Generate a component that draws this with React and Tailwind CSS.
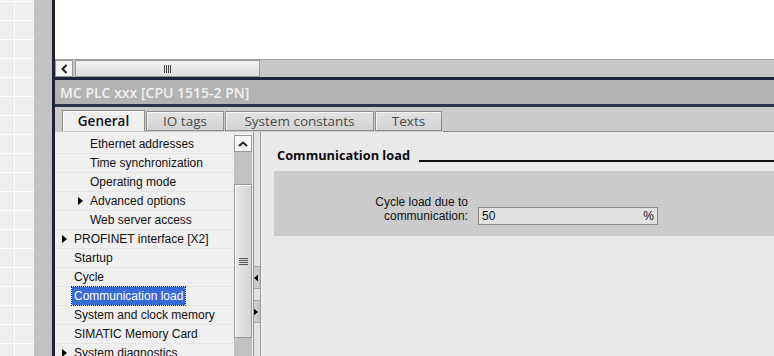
import React from "react";

const font = { fontFamily: '"Liberation Sans", Arial, sans-serif' };
const open = { fontFamily: '"Open Sans", sans-serif' };

function Tri({ dir = "right", className = "" }) {
  if (dir === "right")
    return (
      <svg width="5" height="8" viewBox="0 0 5 8" className={className}>
        <path d="M0 0 L5 4 L0 8 Z" fill="#000" />
      </svg>
    );
  return (
    <svg width="5" height="8" viewBox="0 0 5 8" className={className}>
      <path d="M5 0 L0 4 L5 8 Z" fill="#000" />
    </svg>
  );
}

const treeItems = [
  { t: "Ethernet addresses", indent: 35 },
  { t: "Time synchronization", indent: 35 },
  { t: "Operating mode", indent: 35 },
  { t: "Advanced options", indent: 35, arrow: true },
  { t: "Web server access", indent: 35 },
  { t: "PROFINET interface [X2]", indent: 19, arrow: true },
  { t: "Startup", indent: 19 },
  { t: "Cycle", indent: 19 },
  { t: "Communication load", indent: 19, sel: true },
  { t: "System and clock memory", indent: 19 },
  { t: "SIMATIC Memory Card", indent: 19 },
  { t: "System diagnostics", indent: 19, arrow: true },
];

function Tab({ label, active, w }) {
  if (active)
    return (
      <div
        className="h-[21px] mt-[3px] flex items-center justify-center border border-b-0 border-[#8e8e8e] bg-[#efefef] text-[13.5px] text-[#111] shadow-[inset_1px_1px_0_#fff]"
        style={{ width: w, ...open, fontWeight: 600 }}
      >
        {label}
      </div>
    );
  return (
    <div
      className="h-[20px] mt-[4px] flex items-center justify-center border border-[#8e8e8e] bg-gradient-to-b from-[#e2e2e2] to-[#d2d2d2] text-[13.5px] text-[#4a4a4a] shadow-[inset_1px_1px_0_#f4f4f4]"
      style={{ width: w, ...open }}
    >
      {label}
    </div>
  );
}

export default function App() {
  return (
    <div className="w-[774px] h-[356px] overflow-hidden flex bg-white" style={font}>
      {/* left grid strip */}
      <div className="w-[34px] h-full bg-[#efefef] flex flex-col shrink-0">
        <div className="h-[2px] border-b border-white shrink-0" />
        {Array.from({ length: 19 }).map((_, i) => (
          <div key={i} className="h-[19px] shrink-0 flex border-b border-white">
            <div className="w-[15px] border-r border-white" />
            <div className="flex-1" />
          </div>
        ))}
      </div>
      <div className="w-[18px] h-full bg-[#c2c2c2] shrink-0" />
      <div className="w-[3px] h-full bg-[#1d2335] shrink-0" />

      {/* main */}
      <div className="flex-1 flex flex-col min-w-0">
        <div className="h-[59px] bg-white shrink-0" />
        {/* horizontal scrollbar */}
        <div className="h-[18px] shrink-0 flex bg-[#c8c8c8] border-t border-[#a0a0a0]">
          <div className="w-[18px] h-full flex items-center justify-center bg-[#f4f4f4] border border-[#9a9a9a]">
            <svg width="7" height="10" viewBox="0 0 7 10">
              <path d="M5.5 1 L1.5 5 L5.5 9" stroke="#222" strokeWidth="2" fill="none" />
            </svg>
          </div>
          <div className="w-[2px]" />
          <div className="w-[185px] h-full flex items-center justify-center bg-gradient-to-b from-[#f2f2f2] to-[#dedede] border border-[#9a9a9a]">
            <div className="flex gap-[1px]">
              <div className="w-[1px] h-[8px] bg-[#444]" />
              <div className="w-[1px] h-[8px] bg-[#444]" />
              <div className="w-[1px] h-[8px] bg-[#444]" />
              <div className="w-[1px] h-[8px] bg-[#444]" />
            </div>
          </div>
        </div>
        <div className="h-[3px] bg-[#1f2638] shrink-0" />
        {/* title bar */}
        <div className="h-[24px] shrink-0 bg-[#b3b3b3] flex items-center pl-[5px]">
          <span className="text-[14px] text-[#f0f0f0]" style={{ ...open, fontWeight: 600 }}>
            MC PLC xxx [CPU 1515-2 PN]
          </span>
        </div>
        <div className="h-[3px] bg-[#2c3548] shrink-0" />
        {/* tab bar */}
        <div className="h-[25px] shrink-0 bg-[#cbcbcb] flex items-start pl-[7px]">
          <Tab label="General" active w={83} />
          <div className="w-[1px] h-full flex flex-col justify-end"><div className="h-[1px] bg-[#8e8e8e]" /></div>
          <div className="flex-1 h-full flex flex-col">
            <div className="flex gap-[1px] flex-1">
              <Tab label="IO tags" w={78} />
              <Tab label="System constants" w={149} />
              <Tab label="Texts" w={67} />
              <div className="flex-1 flex flex-col justify-end">
                <div className="h-[1px] bg-[#8e8e8e]" />
              </div>
            </div>
          </div>
        </div>
        {/* content */}
        <div className="flex-1 flex min-h-0">
          {/* tree */}
          <div className="w-[179px] shrink-0 bg-[#efefef] pt-[3px] flex flex-col">
            {treeItems.map((it, i) => (
              <div
                key={i}
                className="h-[19px] shrink-0 flex items-center border-b border-[#e5e5e5] text-[12px] text-[#111]"
                style={{ paddingLeft: it.indent - (it.arrow ? 12 : 0) }}
              >
                {it.arrow && <Tri className="mr-[7px]" />}
                {it.sel ? (
                  <span className="bg-[#3569d6] text-white px-[2px] h-[18px] flex items-center outline outline-1 outline-dotted outline-[#111] -ml-[2px]">
                    {it.t}
                  </span>
                ) : (
                  <span>{it.t}</span>
                )}
              </div>
            ))}
          </div>
          {/* tree scrollbar */}
          <div className="w-[19px] shrink-0 bg-[#efefef] flex flex-col pt-[3px]">
            <div className="h-[17px] w-[18px] shrink-0 bg-[#f6f6f6] border border-[#9a9a9a] shadow-[inset_1px_1px_0_#fff] flex items-center justify-center">
              <svg width="10" height="6" viewBox="0 0 10 6">
                <path d="M1 5 L5 1.5 L9 5" stroke="#222" strokeWidth="2" fill="none" />
              </svg>
            </div>
            <div className="w-[18px] flex-1 bg-[#c2c2c2] flex flex-col">
              <div className="h-[32px] shrink-0" />
              <div className="h-[154px] shrink-0 border border-[#9a9a9a] bg-gradient-to-r from-[#e8e8e8] to-[#d6d6d6] shadow-[inset_1px_1px_0_#fff] flex items-center justify-center">
                <div className="flex flex-col gap-[1px]">
                  <div className="w-[9px] h-[1px] bg-[#555]" />
                  <div className="w-[9px] h-[1px] bg-[#555]" />
                  <div className="w-[9px] h-[1px] bg-[#555]" />
                  <div className="w-[9px] h-[1px] bg-[#555]" />
                </div>
              </div>
            </div>
          </div>
          {/* splitter */}
          <div className="w-[8px] shrink-0 bg-[#e3e3e3] border-x border-[#9a9a9a] flex flex-col">
            <div className="h-[134px] shrink-0" />
            <div className="h-[23px] shrink-0 bg-gradient-to-r from-[#d0d0d0] to-[#c4c4c4] border-y border-[#a8a8a8] flex items-center justify-start">
              <Tri dir="left" className="w-[4px]" />
            </div>
            <div className="h-[11px] shrink-0" />
            <div className="h-[23px] shrink-0 bg-gradient-to-r from-[#d0d0d0] to-[#c4c4c4] border-y border-[#a8a8a8] flex items-center justify-start">
              <Tri dir="right" className="w-[4px]" />
            </div>
          </div>
          <div className="w-[2px] shrink-0 bg-[#efefef]" />
          {/* right pane */}
          <div className="flex-1 bg-[#e9e9e9] flex flex-col pt-[14px] min-w-0">
            <div className="flex items-end pl-[14px] h-[16px]">
              <span className="text-[12.8px] text-[#0a0a14] leading-none" style={{ ...open, fontWeight: 700 }}>
                Communication load
              </span>
              <div className="flex-1 ml-[9px] h-[2px] bg-[#111]" />
            </div>
            <div className="ml-[11px] mt-[9px] h-[65px] bg-[#cbcbcb] flex items-start pt-[24px]">
              <div className="w-[194px] text-right text-[12px] leading-[14px] text-[#111]">
                Cycle load due to
                <br />
                communication:
              </div>
              <div className="ml-[10px] mt-[12px] w-[180px] h-[18px] bg-[#e1e1e1] border border-[#8a8a8a] flex items-center justify-between px-[3px] text-[12px] text-[#111]">
                <span>50</span>
                <span>%</span>
              </div>
            </div>
          </div>
        </div>
      </div>
    </div>
  );
}
